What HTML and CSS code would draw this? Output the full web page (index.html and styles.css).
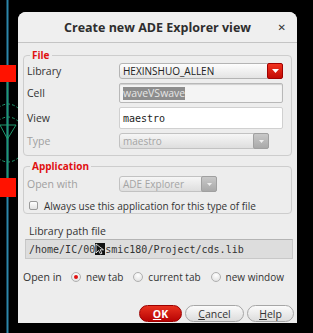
FILE: index.html
```html
<!DOCTYPE html>
<html>
<head>
<meta charset="utf-8">
<link rel="stylesheet" href="styles.css">
</head>
<body>
<svg class="schematic" width="18" height="333" viewBox="0 0 18 333">
  <line x1="7.5" y1="0" x2="7.5" y2="333" stroke="#2c86aa" stroke-width="2"/>
  <line x1="7.5" y1="82" x2="7.5" y2="178" stroke="#1f9a6e" stroke-width="1.5"/>
  <path d="M-2 108 Q8 100 18 108" fill="none" stroke="#1f9a6e" stroke-width="1" stroke-dasharray="3 2"/>
  <path d="M-2 121 Q8 113 18 121" fill="none" stroke="#1f9a6e" stroke-width="1" stroke-dasharray="3 2"/>
  <path d="M0 125 L16 125 L7.5 139 Z" fill="none" stroke="#1f9a6e" stroke-width="1"/>
  <path d="M-2 158 Q8 166 18 158" fill="none" stroke="#1f9a6e" stroke-width="1" stroke-dasharray="3 2"/>
  <rect x="0" y="65" width="16" height="17" fill="#ff1200"/>
  <rect x="0" y="178" width="16" height="19" fill="#ff1200"/>
</svg>
<div class="dialog">
  <div class="titlebar">
    <span class="title">Create new ADE Explorer view</span>
    <span class="close">✕</span>
  </div>
  <div class="content">
    <fieldset class="group file">
      <legend>File</legend>
      <div class="form">
        <span class="lbl">Library</span>
        <div class="combo active"><span class="val">HEXINSHUO_ALLEN</span><span class="drop red"><svg width="7" height="4" viewBox="0 0 7 4"><path d="M0 0 L7 0 L3.5 4 Z" fill="#fff"/></svg></span></div>
        <span class="lbl">Cell</span>
        <div class="input cell"><span class="sel">waveVSwave</span></div>
        <span class="lbl">View</span>
        <div class="input view mono">maestro</div>
        <span class="lbl dis">Type</span>
        <div class="combo disabled type"><span class="val">maestro</span><span class="drop grey"><svg width="5" height="3" viewBox="0 0 5 3"><path d="M0 0 L5 0 L2.5 3 Z" fill="#eee"/></svg></span></div>
      </div>
    </fieldset>
    <fieldset class="group app">
      <legend>Application</legend>
      <div class="form app-form">
        <span class="lbl dis">Open with</span>
        <div class="combo disabled openwith"><span class="val">ADE Explorer</span><span class="drop grey"><svg width="5" height="3" viewBox="0 0 5 3"><path d="M0 0 L5 0 L2.5 3 Z" fill="#eee"/></svg></span></div>
      </div>
      <div class="check-row"><span class="checkbox"></span><span>Always use this application for this type of file</span></div>
    </fieldset>
    <div class="path-label">Library path file</div>
    <div class="path mono">/home/IC/00<span class="cursor"><svg width="10" height="12" viewBox="0 0 10 12"><rect x="0" y="0" width="10" height="12" fill="#111"/><path d="M1 1 L1 10 L3.5 7.5 L5.5 11 L7 10.2 L5 6.8 L8.5 6.8 Z" fill="#111" stroke="#fff" stroke-width="0.8"/></svg></span>smic180/Project/cds.lib</div>
    <div class="open-row">
      <span class="open-lbl">Open in</span>
      <span class="radio on"></span><span class="rtext">new tab</span>
      <span class="radio"></span><span class="rtext">current tab</span>
      <span class="radio"></span><span class="rtext">new window</span>
    </div>
    <div class="buttons">
      <button class="btn ok"><u>O</u>K</button>
      <button class="btn"><u>C</u>ancel</button>
      <button class="btn"><u>H</u>elp</button>
    </div>
  </div>
</div>
</body>
</html>
```
FILE: styles.css
```css
html, body {
  margin: 0;
  padding: 0;
}
body {
  width: 313px;
  height: 333px;
  background: #000;
  position: relative;
  overflow: hidden;
  font-family: "Open Sans", "DejaVu Sans", sans-serif;
  font-size: 10.5px;
  color: #333;
}
.schematic {
  position: absolute;
  left: 0;
  top: 0;
}
.dialog {
  position: relative;
  margin: 12px 0 0 18px;
  width: 279px;
  height: 311px;
  background: #ededed;
  border-radius: 8px 8px 0 0;
  display: flex;
  flex-direction: column;
}
.titlebar {
  height: 30px;
  border-bottom: 1px solid #c4c4c4;
  display: grid;
  grid-template-columns: 1fr auto 1fr;
  align-items: center;
  background: #efefef;
  border-radius: 8px 8px 0 0;
}
.title {
  grid-column: 2;
  font-weight: bold;
  font-size: 12.5px;
  color: #2e2e2e;
}
.close {
  grid-column: 3;
  justify-self: end;
  margin-right: 11px;
  font-size: 10px;
  font-weight: bold;
  color: #333;
}
.content {
  padding: 0 5px;
  display: flex;
  flex-direction: column;
}
.group {
  margin: 5px 0 0 0;
  padding: 1px 8px 6px 3px;
  border: 1px solid #cdcdcd;
  border-radius: 4px;
  min-width: 0;
}
.group legend {
  margin-left: 3px;
  padding: 0 2px;
  line-height: 14px;
  font-weight: bold;
  font-size: 10px;
  color: #e01010;
}
.group.app {
  margin-top: 3px;
  padding: 3px 8px 1px 3px;
}
.form {
  display: grid;
  grid-template-columns: 92px 164px;
  grid-template-rows: 16px 20px 22px 16px;
  row-gap: 4px;
  align-items: center;
}
.app-form {
  grid-template-rows: 16px;
}
.lbl {
  color: #333;
}
.lbl.dis {
  color: #a0a0a0;
}
.combo {
  height: 16px;
  box-sizing: border-box;
  border: 1px solid #b4b4b4;
  border-radius: 3px;
  display: flex;
  align-items: stretch;
  background: linear-gradient(#fdfdfd, #e4e4e4);
}
.combo .val {
  flex: 1;
  padding-left: 3px;
  line-height: 14px;
  font-size: 10px;
  color: #222;
}
.combo.disabled {
  background: linear-gradient(#f6f6f6, #dedede);
  border-color: #c2c2c2;
}
.combo.disabled .val {
  color: #a4a4a4;
}
.combo.type {
  width: 150px;
}
.combo.openwith {
  width: 98px;
}
.drop {
  width: 14px;
  display: flex;
  align-items: center;
  justify-content: center;
  border-radius: 2px;
  margin: -1px -1px -1px 0;
}
.drop.red {
  background: linear-gradient(#f2331f, #c20a04);
  border: 1px solid #a00000;
}
.drop.grey {
  background: linear-gradient(#c8c8c8, #a9a9a9);
  border: 1px solid #a0a0a0;
}
.input {
  box-sizing: border-box;
  border: 1px solid #b8b8b8;
  border-radius: 2px;
  display: flex;
  align-items: center;
  padding-left: 3px;
}
.input.cell {
  height: 20px;
  background: #f4f4f4;
  box-shadow: inset 0 1px 1px rgba(0,0,0,0.15);
}
.sel {
  background: #8d8d8d;
  color: #e6e6e6;
  line-height: 13px;
}
.input.view {
  height: 22px;
  background: #fff;
  border-color: #d0d0d0;
  color: #222;
}
.mono {
  font-family: "DejaVu Sans Mono", "Liberation Mono", monospace;
  font-size: 10px;
}
.check-row {
  margin-top: 7px;
  height: 13px;
  display: flex;
  align-items: center;
  gap: 6px;
  padding-left: 2px;
  color: #333;
  font-size: 10px;
  white-space: nowrap;
}
.checkbox {
  flex: none;
  width: 9px;
  height: 9px;
  box-sizing: border-box;
  border: 1px solid #9a9a9a;
  border-radius: 2px;
  background: linear-gradient(#ffffff, #e2e2e2);
}
.path-label {
  margin: 10px 0 0 6px;
  line-height: 14px;
  color: #333;
}
.path {
  margin: 1px -1px 0 2px;
  height: 20px;
  box-sizing: border-box;
  background: #dddddd;
  border: 1px solid #c8c8c8;
  border-top-color: #b4b4b4;
  display: flex;
  align-items: center;
  padding-left: 3px;
  color: #333;
}
.cursor {
  display: inline-flex;
}
.open-row {
  margin-top: 11px;
  height: 14px;
  display: flex;
  align-items: center;
  white-space: nowrap;
}
.open-lbl {
  flex: none;
  width: 48px;
}
.radio {
  flex: none;
  width: 10px;
  height: 10px;
  box-sizing: border-box;
  border-radius: 50%;
  border: 1px solid #b0b0b0;
  background: radial-gradient(circle at 50% 30%, #ffffff, #dcdcdc);
  display: flex;
  align-items: center;
  justify-content: center;
}
.radio.on::after {
  content: "";
  width: 4px;
  height: 4px;
  border-radius: 50%;
  background: #e01010;
}
.rtext {
  flex: none;
  margin: 0 10px 0 5px;
  font-size: 10px;
}
.buttons {
  margin: 21px -2px 0 0;
  display: flex;
  justify-content: flex-end;
  gap: 3px;
}
.btn {
  height: 17px;
  box-sizing: border-box;
  border-radius: 9px;
  border: 1px solid #a6a6a6;
  background: linear-gradient(#fbfbfb, #dcdcdc);
  font-family: "Open Sans", "DejaVu Sans", sans-serif;
  font-size: 10.5px;
  color: #333;
  padding: 0;
  width: 59px;
  line-height: 14px;
}
.btn:last-child {
  width: 47px;
}
.btn.ok {
  width: 43px;
  background: linear-gradient(#e8321f, #b80404);
  border-color: #9c0000;
  color: #fff;
  font-weight: bold;
}
```
